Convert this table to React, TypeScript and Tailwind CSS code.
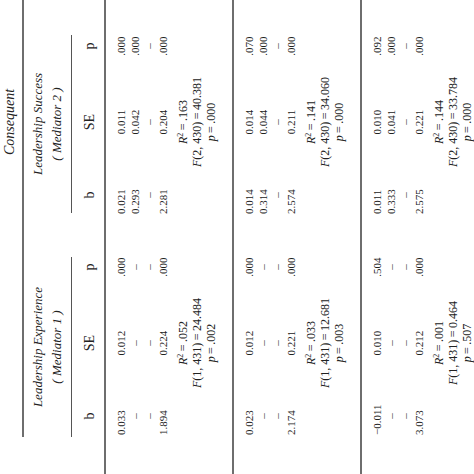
import React from "react";

type G = { b: string[]; se: string[]; p: string[]; r2: string; df: string; f: string; pv: string };

const blocks: { e: G; s: G }[] = [
  {
    e: { b: ["0.033", "–", "–", "1.894"], se: ["0.012", "–", "–", "0.224"], p: [".000", "–", "–", ".000"], r2: ".052", df: "1, 431", f: "24.484", pv: ".002" },
    s: { b: ["0.021", "0.293", "–", "2.281"], se: ["0.011", "0.042", "–", "0.204"], p: [".000", ".000", "–", ".000"], r2: ".163", df: "2, 430", f: "40.381", pv: ".000" },
  },
  {
    e: { b: ["0.023", "–", "–", "2.174"], se: ["0.012", "–", "–", "0.221"], p: [".000", "–", "–", ".000"], r2: ".033", df: "1, 431", f: "12.681", pv: ".003" },
    s: { b: ["0.014", "0.314", "–", "2.574"], se: ["0.014", "0.044", "–", "0.211"], p: [".070", ".000", "–", ".000"], r2: ".141", df: "2, 430", f: "34.060", pv: ".000" },
  },
  {
    e: { b: ["−0.011", "–", "–", "3.073"], se: ["0.010", "–", "–", "0.212"], p: [".504", "–", "–", ".000"], r2: ".001", df: "1, 431", f: "0.464", pv: ".507" },
    s: { b: ["0.011", "0.333", "–", "2.575"], se: ["0.010", "0.041", "–", "0.221"], p: [".092", ".000", "–", ".000"], r2: ".144", df: "2, 430", f: "33.784", pv: ".000" },
  },
];

function Cols({ b, se, p, header }: { b: React.ReactNode; se: React.ReactNode; p: React.ReactNode; header?: boolean }) {
  const bAlign = header || b === "–" ? "text-center" : "text-left pl-[2px]";
  return (
    <div className="flex whitespace-nowrap">
      <div className={`w-[42px] ${bAlign}`}>{b}</div>
      <div className="w-[32px]" />
      <div className="w-[40px] text-center">{se}</div>
      <div className="w-[42px]" />
      <div className="w-[28px] text-center">{p}</div>
    </div>
  );
}

const T = "\u2009";

function Block({ e, s }: { e: G; s: G }) {
  const stat = (g: G, i: number) => {
    if (i === 0)
      return (
        <>
          <i>R</i>
          <sup className="text-[8px]">2</sup>
          {T}={T}
          {g.r2}
        </>
      );
    if (i === 1)
      return (
        <>
          <i>F</i>({g.df}){T}={T}
          {g.f}
        </>
      );
    return (
      <>
        <i>p</i>
        {T}={T}
        {g.pv}
      </>
    );
  };
  return (
    <div className="flex flex-col pt-[8px] h-[126px] shrink-0 text-[11px]">
      {[0, 1, 2, 3].map((i) => (
        <div key={i} className="flex h-[14px] leading-[14px]">
          <div className="ml-[37px]">
            <Cols b={e.b[i]} se={e.se[i]} p={e.p[i]} />
          </div>
          <div className="ml-[37px]">
            <Cols b={s.b[i]} se={s.se[i]} p={s.p[i]} />
          </div>
        </div>
      ))}
      <div className="mt-[6px] flex flex-col text-[12px]">
        {[0, 1, 2].map((i) => (
          <div key={i} className="flex h-[14px] leading-[14px] whitespace-nowrap">
            <div className="ml-[37px] w-[188px] text-center">{stat(e, i)}</div>
            <div className="ml-[33px] w-[188px] text-center">{stat(s, i)}</div>
          </div>
        ))}
      </div>
    </div>
  );
}

function Rule() {
  return <div className="h-[2px] w-full bg-[#6e6e6e] shrink-0" />;
}

export default function App() {
  return (
    <div className="w-[474px] h-[474px] overflow-hidden bg-white">
      <div className="w-[474px] h-[474px] -rotate-90 flex flex-col text-[#222] font-['Liberation_Serif','Times_New_Roman',serif]">
        <div className="h-[22px] shrink-0 flex">
          <div className="ml-[282px] w-[140px] text-center italic text-[14px] leading-[20px]">Consequent</div>
        </div>
        <div className="ml-[37px] h-[2px] bg-[#6e6e6e] shrink-0" />
        <div className="pt-[4px] flex italic text-[13px] leading-[19px] shrink-0">
          <div className="ml-[37px] w-[180px] text-center">
            <div>Leadership Experience</div>
            <div>( Mediator 1 )</div>
          </div>
          <div className="ml-[44px] w-[178px] text-center">
            <div>Leadership Success</div>
            <div>( Mediator 2 )</div>
          </div>
        </div>
        <div className="mt-[5px] flex h-[1px] shrink-0">
          <div className="ml-[37px] w-[180px] bg-[#555]" />
          <div className="ml-[44px] w-[178px] bg-[#555]" />
        </div>
        <div className="mt-[11px] mb-[7px] flex h-[14px] leading-[14px] text-[14px] shrink-0">
          <div className="ml-[37px]">
            <Cols header b="b" se="SE" p="p" />
          </div>
          <div className="ml-[37px]">
            <Cols header b="b" se="SE" p="p" />
          </div>
        </div>
        {blocks.map((bl, i) => (
          <React.Fragment key={i}>
            <Rule />
            <Block e={bl.e} s={bl.s} />
          </React.Fragment>
        ))}
      </div>
    </div>
  );
}
